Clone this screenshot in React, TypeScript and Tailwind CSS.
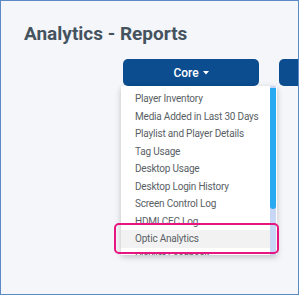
import React from "react";

const items = [
  "Player Inventory",
  "Media Added in Last 30 Days",
  "Playlist and Player Details",
  "Tag Usage",
  "Desktop Usage",
  "Desktop Login History",
  "Screen Control Log",
  "HDMI CEC Log",
  "Optic Analytics",
  "Playlist Feedback",
];

export default function App() {
  return (
    <div
      className="relative w-[299px] h-[295px] border border-[#5b8ac4] bg-[#f4f6fa] overflow-hidden"
      style={{ fontFamily: "Roboto, 'Liberation Sans', sans-serif" }}
    >
      <div className="pl-[23px] pt-[21px]">
        <h1 className="text-[19px] leading-[24px] font-bold text-[#45535e]">
          Analytics - Reports
        </h1>
      </div>
      <div className="flex gap-[20px] pl-[122px] mt-[13px]">
        <div className="w-[136px] h-[27px] shrink-0 rounded-[5px] bg-[#0b4d8f] flex items-center justify-center gap-[4px] text-white text-[12px] font-medium">
          <span>Core</span>
          <svg width="6" height="4" viewBox="0 0 6 4" className="mt-[1px]">
            <path d="M0 0 L6 0 L3 3.5 Z" fill="#ffffff" />
          </svg>
        </div>
        <div className="w-[136px] h-[27px] shrink-0 rounded-[5px] bg-[#0b4d8f]" />
      </div>

      <div className="absolute left-[120px] top-[85px] w-[156px] h-[169px] bg-white shadow-[0_2px_6px_rgba(0,0,0,0.22)] overflow-hidden">
        <div className="flex flex-col pt-[4px]">
          {items.map((t) => (
            <div
              key={t}
              className={
                "h-[17.5px] flex items-center pl-[14px] text-[10px] tracking-[-0.2px] text-[#5a5f66] whitespace-nowrap " +
                (t === "Optic Analytics" ? "bg-[#f2f2f2]" : "")
              }
            >
              {t}
            </div>
          ))}
        </div>
        <div className="absolute right-[1px] top-0 w-[6px] h-full bg-[#c9d7f7]">
          <div className="w-full h-[121px] mt-[2px] rounded-b-[3px] bg-[#27aaf2]" />
        </div>
      </div>

      <div className="absolute left-[113px] top-[222px] w-[165px] h-[31px] border-2 border-[#e6157f] rounded-[5px]" />
    </div>
  );
}
